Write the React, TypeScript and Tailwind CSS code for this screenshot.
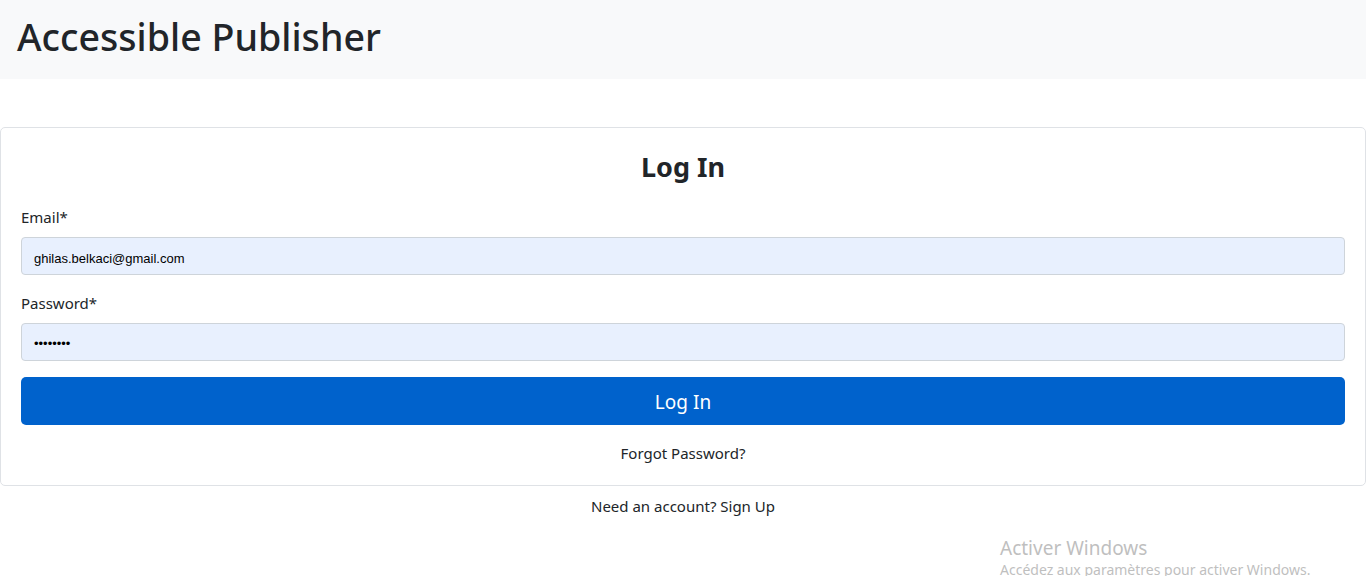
export default function App() {
  const font = { fontFamily: '"Noto Sans", "Open Sans", sans-serif' };
  const autofill = { fontFamily: '"Liberation Sans", Arial, sans-serif' };
  return (
    <div className="relative min-h-[576px] bg-white text-[#212529] overflow-hidden" style={font}>
      {/* header */}
      <header className="h-[79px] bg-[#f8f9fa] flex items-center px-[17px]">
        <h1 className="text-[37.6px] font-medium leading-none pb-[6px]">Accessible Publisher</h1>
      </header>

      {/* card */}
      <div className="mt-12 border border-[#dfe2e6] rounded-[5px] px-5 pt-5 pb-5">
        <h2 className="text-center text-[27px] font-bold leading-[38px] mb-[19px]">Log In</h2>

        <div className="mb-4">
          <label className="block text-[15px] leading-6 mb-2">Email*</label>
          <div className="h-[38px] bg-[#e8f0fe] border border-[#ced4da] rounded-[4px] px-3 pt-[6px] flex items-center">
            <span className="text-[13px] text-black" style={autofill}>
              ghilas.belkaci@gmail.com
            </span>
          </div>
        </div>

        <div className="mb-4">
          <label className="block text-[15px] leading-6 mb-2">Password*</label>
          <div className="h-[38px] bg-[#e8f0fe] border border-[#ced4da] rounded-[4px] px-3 pt-[4px] flex items-center">
            <span className="text-[13px] text-black" style={autofill}>
              ••••••••
            </span>
          </div>
        </div>

        <button className="w-full h-12 bg-[#0062cc] text-white text-[19px] rounded-[5px] pt-[2px]">Log In</button>

        <div className="mt-4 text-center text-[15px] leading-6">Forgot Password?</div>
      </div>

      <div className="mt-2 text-center text-[15px] leading-6">Need an account? Sign Up</div>

      {/* windows watermark */}
      <div className="absolute left-[1000px] top-[536px] text-[#bfbfbf]">
        <div className="text-[19px] leading-6">Activer Windows</div>
        <div className="text-[14px] leading-5 whitespace-nowrap">Accédez aux paramètres pour activer Windows.</div>
      </div>
    </div>
  );
}
